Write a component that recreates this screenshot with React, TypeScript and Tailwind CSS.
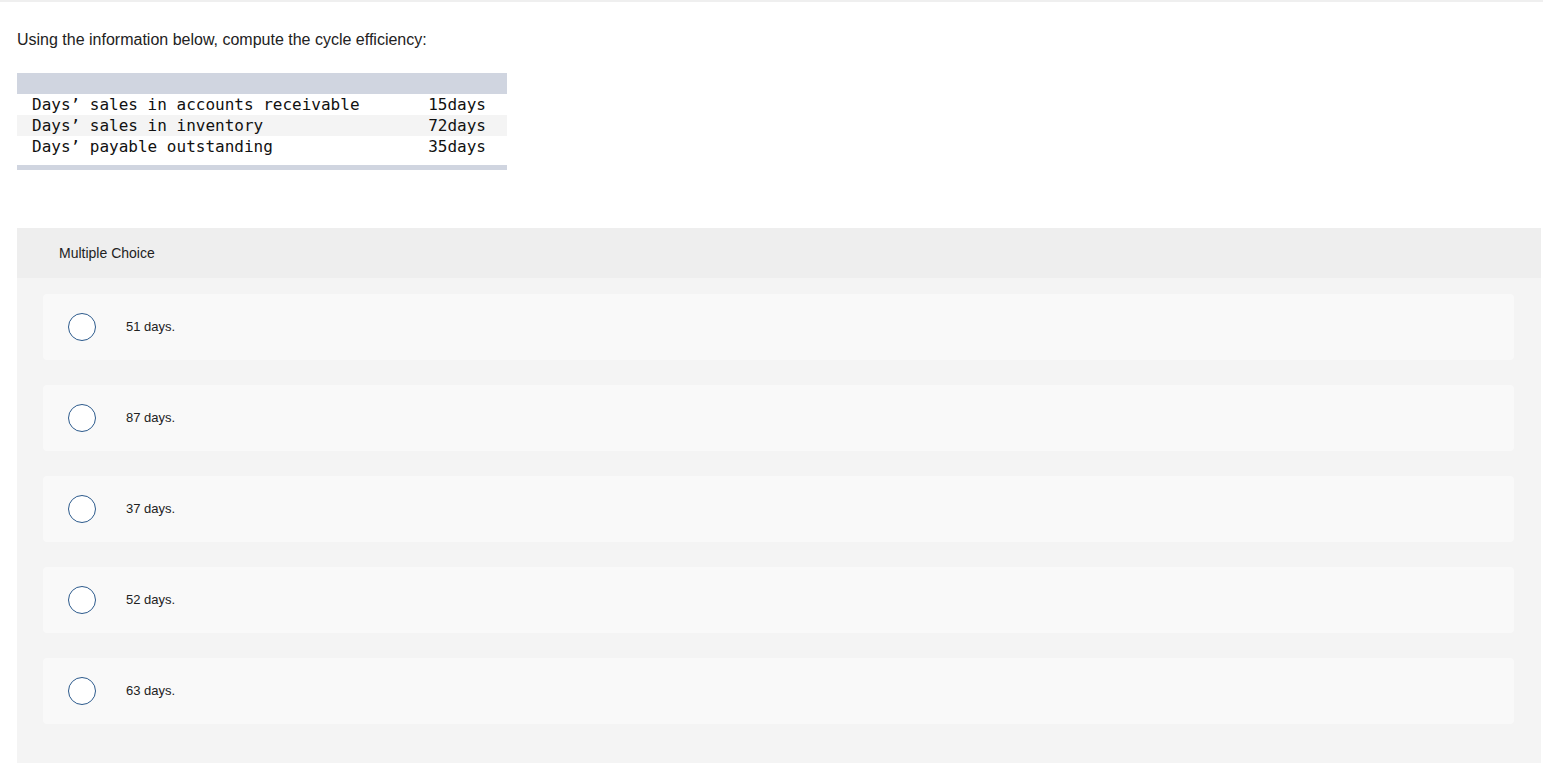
import React from 'react';

const rows = [
  { label: 'Days’ sales in accounts receivable', value: '15days', shaded: false },
  { label: 'Days’ sales in inventory', value: '72days', shaded: true },
  { label: 'Days’ payable outstanding', value: '35days', shaded: false },
];

const choices = ['51 days.', '87 days.', '37 days.', '52 days.', '63 days.'];

const App: React.FC = () => {
  return (
    <div className="min-h-[763px] bg-white font-['Liberation_Sans',Arial,sans-serif] text-[#222]">
      <div className="h-[2px] bg-[#efefef]" />

      <div className="pl-[17px] pr-[2px]">
        <p className="pt-[28px] text-[16px] leading-[20px] text-[#222]">
          Using the information below, compute the cycle efficiency:
        </p>

        {/* Data table */}
        <div className="mt-[23px] w-[490px] font-['DejaVu_Sans_Mono',monospace] text-[16px] text-[#111]">
          <div className="h-[21px] bg-[#d0d5e0]" />
          {rows.map((row) => (
            <div
              key={row.label}
              className={`flex h-[21px] items-center justify-between pl-[15px] pr-[21px] ${row.shaded ? 'bg-[#f4f4f4]' : ''}`}
            >
              <span className="whitespace-pre">{row.label}</span>
              <span>{row.value}</span>
            </div>
          ))}
          <div className="mt-[8px] h-[5px] bg-[#d0d5e0]" />
        </div>

        {/* Multiple choice */}
        <div className="mt-[58px] bg-[#f4f4f4] pb-[60px]">
          <div className="flex h-[50px] items-center bg-[#eeeeee] pl-[42px] text-[14px] text-[#222]">
            Multiple Choice
          </div>
          <div className="flex flex-col gap-[25px] pl-[26px] pr-[27px] pt-[16px]">
            {choices.map((c) => (
              <div key={c} className="flex h-[66px] items-center rounded-[4px] bg-[#f9f9f9] pl-[25px]">
                <span className="h-[28px] w-[28px] rounded-full border border-[#2c5a8c] bg-white" />
                <span className="ml-[30px] text-[13px] text-[#222]">{c}</span>
              </div>
            ))}
          </div>
        </div>
      </div>
    </div>
  );
};

export default App;
